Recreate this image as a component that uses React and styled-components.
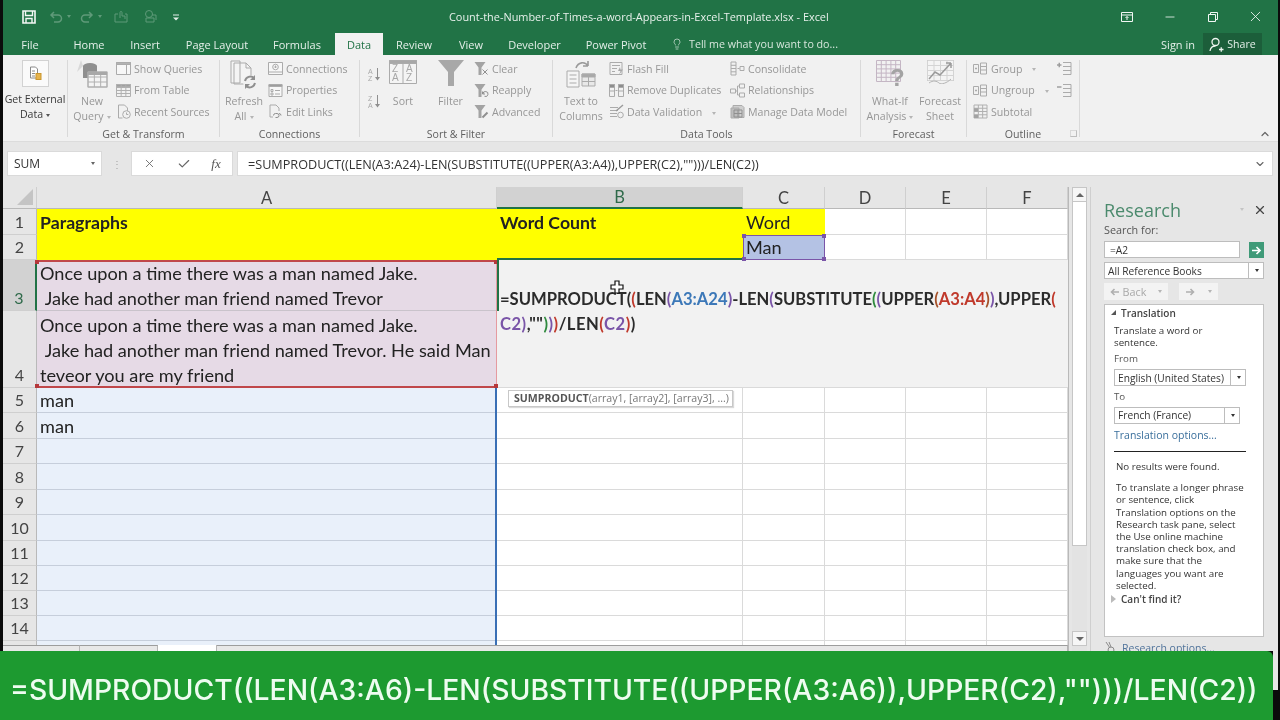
import React from 'react'
import styled, { createGlobalStyle } from 'styled-components'
import { Check, ChevronDown, ChevronUp, Lightbulb, Minus, X } from 'lucide-react'

const GlobalStyle = createGlobalStyle`
    html, body {
        margin: 0;
        padding: 0;
        background: #0b0b0b;
    }
    * {
        box-sizing: border-box;
    }
`

const UI_FONT = `"Open Sans", "Noto Sans", "Liberation Sans", sans-serif`
const CELL_FONT = `Lato, "Open Sans", sans-serif`

const Page = styled.div`
    width: 1280px;
    height: 720px;
    overflow: hidden;
    display: flex;
    flex-direction: column;
    font-family: ${UI_FONT};
    filter: blur(0.3px);
`

const Window = styled.div`
    height: 651px;
    margin: 0 2px 0 3px;
    display: flex;
    flex-direction: column;
    background: #e6e6e6;
    overflow: hidden;
`

/* title bar */
const TitleBar = styled.div`
    height: 33px;
    flex: none;
    display: flex;
    align-items: center;
    background: #217346;
    color: #f2f7f4;
`

const Qat = styled.div`
    width: 446px;
    padding-left: 10px;
    display: flex;
    align-items: center;
`

const QatSlot = styled.span`
    width: ${props => props.$w}px;
    display: flex;
    justify-content: center;
    align-items: center;
    gap: 3px;
`

const Title = styled.div`
    width: 380px;
    font-size: 10.92px;
    white-space: nowrap;
    color: #e8f1ec;
`

const WindowControls = styled.div`
    margin-left: auto;
    display: flex;
    padding-right: 1px;
`

const ControlSlot = styled.span`
    width: 43px;
    height: 33px;
    display: flex;
    justify-content: center;
    align-items: center;
`

/* tabs */
const TabRow = styled.div`
    height: 22px;
    flex: none;
    display: flex;
    align-items: stretch;
    background: #217346;
    color: #e4efe9;
    font-size: 11px;
`

const Tab = styled.div`
    width: ${props => props.$w}px;
    margin-left: ${props => props.$ml || 0}px;
    display: flex;
    justify-content: center;
    align-items: center;
    white-space: nowrap;
    background: ${props => (props.$active ? '#f1f1f1' : 'transparent')};
    color: ${props => (props.$active ? '#217346' : 'inherit')};
`

const TellMe = styled.div`
    margin-left: 11px;
    display: flex;
    align-items: center;
    gap: 6px;
    font-size: 10.7px;
    color: #d6e6dc;
`

const SignIn = styled.div`
    margin-left: auto;
    margin-right: 8px;
    display: flex;
    align-items: center;
`

const Share = styled.div`
    width: 59px;
    margin-right: 16px;
    display: flex;
    justify-content: center;
    align-items: center;
    gap: 3px;
    font-size: 10.6px;
    background: #1c5e3a;
`

/* ribbon */
const Ribbon = styled.div`
    height: 87px;
    flex: none;
    display: flex;
    padding-top: 5px;
    background: #f1f1f1;
    border-bottom: 1px solid #dcdcdc;
    font-size: 10.6px;
    color: #979797;
`

const Group = styled.div`
    position: relative;
    width: ${props => props.$w}px;
    height: 77px;
    flex: none;
    display: flex;
    flex-direction: column;
    border-right: 1px solid #d9d9d9;
`

const GroupBody = styled.div`
    height: 67px;
    flex: none;
    display: flex;
    padding-left: ${props => props.$pl || 0}px;
`

const GroupLabel = styled.div`
    height: 14px;
    flex: none;
    line-height: 14px;
    text-align: center;
    font-size: 10.6px;
    color: #5f5f5f;
    white-space: nowrap;
`

const BigButton = styled.div`
    width: ${props => props.$w}px;
    margin-left: ${props => props.$ml || 0}px;
    flex: none;
    display: flex;
    flex-direction: column;
    align-items: center;
    line-height: 15px;
    white-space: nowrap;
    color: ${props => (props.$on ? '#3a3a3a' : 'inherit')};
`

const BigIcon = styled.div`
    height: ${props => props.$h || 34}px;
    flex: none;
    display: flex;
    align-items: flex-start;
    justify-content: center;
`

const ExternalBox = styled.div`
    width: 27px;
    height: 27px;
    display: flex;
    justify-content: center;
    align-items: center;
    background: #fafafa;
    border: 1px solid #d2d2d2;
`

const SmallCol = styled.div`
    width: ${props => props.$w}px;
    flex: none;
    margin-top: -2px;
    display: flex;
    flex-direction: column;
`

const SmallRow = styled.div`
    height: 21.6px;
    flex: none;
    display: flex;
    align-items: center;
    gap: 3px;
    white-space: nowrap;
`

const IconSlot = styled.span`
    width: 15px;
    height: 15px;
    flex: none;
    display: flex;
    justify-content: center;
    align-items: center;
`

const Caret = styled.span`
    display: inline-block;
    width: 0;
    height: 0;
    margin-left: ${props => props.$ml || 3}px;
    vertical-align: middle;
    border-left: 2.5px solid transparent;
    border-right: 2.5px solid transparent;
    border-top: 3px solid ${props => props.$c || '#b5b5b5'};
`

const SortStack = styled.div`
    width: 14px;
    flex: none;
    display: flex;
    flex-direction: column;
    gap: 12px;
    padding-top: 7px;
`

const Launcher = styled.span`
    position: absolute;
    right: 2px;
    bottom: 0;
    width: 7px;
    height: 7px;
    border: 1px solid #bdbdbd;
    border-top-color: #d8d8d8;
    border-left-color: #d8d8d8;
`

const RibbonEnd = styled.div`
    flex: 1;
    display: flex;
    justify-content: flex-end;
    align-items: flex-end;
    padding: 0 7px 1px 0;
    color: #666;
`

/* formula bar */
const FormulaBar = styled.div`
    height: 45px;
    flex: none;
    display: flex;
    padding: 9px 5px 11px 4px;
    font-size: 12px;
    color: #333;
`

const NameBox = styled.div`
    width: 95px;
    display: flex;
    align-items: center;
    justify-content: space-between;
    padding: 0 6px;
    background: #fff;
    border: 1px solid #dadada;
`

const Dots = styled.div`
    width: 29px;
    display: flex;
    justify-content: center;
    align-items: center;
    color: #a5a5a5;
    font-size: 10px;
    line-height: 4px;
`

const FxBox = styled.div`
    width: 102px;
    display: flex;
    align-items: center;
    background: #fff;
    border: 1px solid #dadada;
`

const FxSlot = styled.span`
    width: ${props => props.$w}px;
    display: flex;
    justify-content: center;
    align-items: center;
    color: #666;
`

const FxMark = styled.i`
    font-family: "Liberation Serif", serif;
    font-size: 13px;
    color: #555;
`

const FormulaInput = styled.div`
    flex: 1;
    margin-left: 4px;
    padding: 0 6px 0 10px;
    display: flex;
    align-items: center;
    justify-content: space-between;
    background: #fff;
    border: 1px solid #dadada;
    white-space: nowrap;
    font-size: 12.65px;
`

/* worksheet */
const Workspace = styled.div`
    flex: 1;
    min-height: 0;
    display: flex;
`

const SheetArea = styled.div`
    width: 1066px;
    flex: none;
    display: flex;
    flex-direction: column;
`

const Sheet = styled.div`
    position: relative;
    height: 458px;
    flex: none;
    display: grid;
    grid-template-columns: 34px 460px 246px 82px 81px 81px 81px;
    grid-template-rows: ${props => props.$rows};
    border-right: 1px solid #b9b9b9;
    overflow: hidden;
    background: #fff;
    font-family: ${CELL_FONT};
    font-size: 18.15px;
    color: #222;
`

const Corner = styled.div`
    position: relative;
    background: #e6e6e6;
    border-right: 1px solid #cfcfcf;
    border-bottom: 1px solid #b9b9b9;

    &::after {
        content: '';
        position: absolute;
        right: 3px;
        bottom: 3px;
        border-left: 16px solid transparent;
        border-bottom: 16px solid #c4c4c4;
    }
`

const ColHead = styled.div`
    display: flex;
    justify-content: center;
    align-items: center;
    font-size: 16.5px;
    background: ${props => (props.$on ? '#d2d2d2' : '#e6e6e6')};
    color: ${props => (props.$on ? '#2f6a4a' : '#444')};
    border-right: 1px solid #cfcfcf;
    border-bottom: ${props => (props.$on ? '2px solid #217346' : '1px solid #b9b9b9')};
`

const RowHead = styled.div`
    grid-column: 1;
    display: flex;
    justify-content: center;
    align-items: flex-end;
    line-height: 25px;
    font-size: 16px;
    background: ${props => (props.$on ? '#d2d2d2' : '#e6e6e6')};
    color: ${props => (props.$on ? '#2f6a4a' : '#444')};
    border-right: ${props => (props.$on ? '2px solid #217346' : '1px solid #b9b9b9')};
    border-bottom: 1px solid #cfcfcf;
`

const Cell = styled.div`
    display: flex;
    align-items: flex-end;
    padding-left: 3px;
    line-height: 25.2px;
    white-space: pre-wrap;
    overflow: hidden;
    font-weight: ${props => (props.$bold ? 700 : 400)};
    font-size: ${props => (props.$bold ? '17.7px' : 'inherit')};
    background: ${props => props.$fill || '#fff'};
    border-right: 1px solid ${props => props.$line || '#dadada'};
    border-bottom: 1px solid ${props => props.$line || '#dadada'};
`

const CellText = styled.span`
    margin-bottom: -1.5px;
`

const Editor = styled.div`
    grid-column: span 5;
    grid-row: span 2;
    padding: 27px 0 0 3px;
    line-height: 25.2px;
    background: #f2f2f2;
    border-bottom: 1px solid #dadada;
    font-weight: 700;
    font-size: 16.6px;
    white-space: pre;
    color: #2b2b2b;
`

const EditorLine = styled.div`
    letter-spacing: ${props => props.$ls || 0}px;
`

const Tint = styled.span`
    color: ${props => props.$c};
`

/* these sit over the cells, placed in a grid area of the sheet */
const Range = styled.div`
    position: absolute;
    inset: 0;
    grid-area: ${props => props.$area};
    pointer-events: none;
    border-style: solid;
    border-color: ${props => props.$c};
    border-width: ${props => props.$bw};
`

const Handle = styled.span`
    position: absolute;
    width: 4px;
    height: 4px;
    background: ${props => props.$c};
    left: ${props => (props.$x ? 'auto' : '-2px')};
    right: ${props => (props.$x ? '-2px' : 'auto')};
    top: ${props => (props.$y ? 'auto' : '-2px')};
    bottom: ${props => (props.$y ? '-2px' : 'auto')};
`

const Tooltip = styled.div`
    position: absolute;
    left: 505px;
    top: 203px;
    width: 225px;
    height: 17px;
    padding-left: 5px;
    background: #fff;
    border: 1px solid #c8c8c8;
    box-shadow: 1px 1px 1px rgba(0, 0, 0, 0.15);
    font-family: ${UI_FONT};
    font-size: 10.6px;
    line-height: 14px;
    white-space: nowrap;
    color: #777;

    b {
        font-weight: 700;
        color: #555;
    }
`

const Pointer = styled.svg`
    position: absolute;
    left: 607px;
    top: 93px;
`

const SheetTabs = styled.div`
    height: 6px;
    flex: none;
    display: flex;
    background: #e6e6e6;
    border-right: 1px solid #b9b9b9;
`

const SheetTab = styled.div`
    width: ${props => props.$w}px;
    flex: ${props => (props.$w ? 'none' : 1)};
    background: ${props => (props.$on ? '#fff' : '#e8e8e8')};
    border-top: ${props => (props.$on ? '0' : '1px solid #9d9d9d')};
    border-right: 1px solid #b5b5b5;
`

/* vertical scroll bar */
const VScroll = styled.div`
    width: 15px;
    flex: none;
    margin: 0 3px;
    display: flex;
    flex-direction: column;
    background: #e3e3e3;
`

const ScrollBtn = styled.div`
    height: 15px;
    flex: none;
    display: flex;
    justify-content: center;
    align-items: center;
    background: #f6f6f6;
    border: 1px solid #c6c6c6;
`

const ScrollThumb = styled.div`
    height: 344px;
    flex: none;
    background: #fff;
    border: 1px solid #c6c6c6;
    border-top: 0;
`

const ScrollTrack = styled.div`
    flex: 1;
`

const ScrollFoot = styled.div`
    height: 5px;
    flex: none;
`

const Arrow = styled.span`
    width: 0;
    height: 0;
    border-left: 4px solid transparent;
    border-right: 4px solid transparent;
    ${props => (props.$up ? 'border-bottom' : 'border-top')}: 4px solid #666;
`

/* research pane */
const Research = styled.div`
    flex: 1;
    display: flex;
    flex-direction: column;
    padding: 10px 14px 0 13px;
    border-left: 1px solid #cfcfcf;
    font-size: 10.2px;
    color: #333;

    & > * {
        flex: none;
    }
`

const ResearchHead = styled.div`
    height: 25px;
    display: flex;
    align-items: center;
    color: #4b8a6d;
    font-size: 18px;
`

const HeadTools = styled.div`
    margin-left: auto;
    margin-right: -3px;
    display: flex;
    align-items: center;
    gap: 9px;
    color: #444;
`

const SearchLabel = styled.div`
    height: 19px;
    line-height: 15px;
    font-size: 10.8px;
    color: #555;
`

const SearchRow = styled.div`
    height: 17px;
    display: flex;
    justify-content: space-between;
`

const Field = styled.div`
    width: ${props => (props.$w ? `${props.$w}px` : '100%')};
    height: 17px;
    margin-top: ${props => props.$mt || 0}px;
    display: flex;
    align-items: center;
    justify-content: space-between;
    padding-left: ${props => props.$pl || 5}px;
    background: #fff;
    border: 1px solid #bdbdbd;
    white-space: nowrap;
`

const DropBtn = styled.span`
    width: 15px;
    height: 100%;
    display: flex;
    justify-content: center;
    align-items: center;
    border-left: 1px solid #bdbdbd;
`

const GoBtn = styled.div`
    width: 15px;
    height: 16px;
    margin-top: 1px;
    display: flex;
    justify-content: center;
    align-items: center;
    background: #3f9a78;
`

const NavRow = styled.div`
    height: 17px;
    margin-top: 4px;
    display: flex;
    color: #a9a9a9;
    font-size: 10.8px;
`

const NavBtn = styled.div`
    width: ${props => props.$w}px;
    margin-right: ${props => props.$mr || 0}px;
    display: flex;
    align-items: center;
    justify-content: space-around;
    background: #f3f3f3;
`

const BackLabel = styled.span`
    display: flex;
    align-items: center;
    gap: 3px;
`

const Panel = styled.div`
    height: 333px;
    margin-top: 4px;
    padding: 0 0 0 9px;
    background: #fff;
    border: 1px solid #c2c2c2;
    font-size: 9.75px;
`

const PanelTitle = styled.div`
    height: 15px;
    margin-left: -3px;
    display: flex;
    align-items: center;
    gap: 5px;
    font-weight: 600;
    font-size: 10px;
    color: #444;
`

const OpenTri = styled.span`
    width: 0;
    height: 0;
    border-left: 5px solid transparent;
    border-bottom: 5px solid #555;
`

const ClosedTri = styled.span`
    width: 0;
    height: 0;
    border-top: 4px solid transparent;
    border-bottom: 4px solid transparent;
    border-left: 5px solid #bbb;
`

const PanelText = styled.div`
    margin-top: ${props => props.$mt || 0}px;
    margin-left: ${props => props.$ml || 0}px;
    line-height: 12.2px;
    white-space: pre;
    color: ${props => props.$c || '#333'};
`

const PanelRule = styled.div`
    width: 132px;
    height: 1px;
    margin-top: 10.5px;
    background: #222;
`

const PanelLink = styled.div`
    margin-top: 5px;
    line-height: 12px;
    color: #3a6f9c;
    font-size: 10.5px;
`

const PanelField = styled(Field)`
    font-size: 10.2px;
`

const ResearchFoot = styled.div`
    height: 14px;
    margin-top: 4px;
    display: flex;
    align-items: center;
    gap: 4px;
    color: #51749b;
    font-size: 10.5px;
`

/* green caption */
const Bottom = styled.div`
    height: 69px;
    flex: none;
    display: flex;
`

const Caption = styled.div`
    width: 1273px;
    flex: none;
    padding: 10px 0 0 10px;
    background: #1d9a30;
    border-top-right-radius: 6px;
    color: #eefcf0;
    font-family: Inter, "Open Sans", sans-serif;
    font-size: 28.3px;
    font-weight: 500;
    line-height: 58px;
    white-space: nowrap;
`

const CaptionEdge = styled.div`
    width: 5px;
    height: 39px;
    background: #e6e6e6;
`

/* icons */
const Ico = styled.svg.attrs(props => ({
    width: props.$w || 15,
    height: props.$h || props.$w || 15,
    viewBox: `0 0 ${props.$w || 15} ${props.$h || props.$w || 15}`,
    fill: 'none',
    stroke: props.$c || '#ababab',
    strokeWidth: 1,
}))`
    display: block;
    flex: none;
`

const SvgLetters = styled.text`
    font-family: "Liberation Sans", sans-serif;
    font-size: ${props => props.$s || 7}px;
    font-weight: ${props => props.$weight || 400};
    fill: ${props => props.$c || '#a8a8a8'};
    stroke: none;
`

const TableLines = ({ x, y, w, h, cols = 3, rows = 3, c = '#b0b0b0' }) => {
    const lines = []
    for (let i = 0; i <= cols; i++) {
        const px = x + (w / cols) * i
        lines.push(<path key={'c' + i} d={`M${px} ${y}V${y + h}`} stroke={c} />)
    }
    for (let i = 0; i <= rows; i++) {
        const py = y + (h / rows) * i
        lines.push(<path key={'r' + i} d={`M${x} ${py}H${x + w}`} stroke={c} />)
    }
    return <>{lines}</>
}

const SaveIcon = () => (
    <Ico $w={14} $c="#f4f8f5">
        <path d="M1 1h12v12H1z" strokeWidth="1.6" />
        <path d="M3.5 1v4.5h7V1M4 13V8.5h6V13" strokeWidth="1.4" />
    </Ico>
)

const UndoIcon = () => (
    <Ico $w={14} $c="#5f9a79">
        <path d="M2 5h7a3.5 3.5 0 0 1 0 7H5M5 2 2 5l3 3" strokeWidth="1.5" />
    </Ico>
)

const RedoIcon = () => (
    <Ico $w={14} $c="#5f9a79">
        <path d="M12 5H5a3.5 3.5 0 0 0 0 7h4M9 2l3 3-3 3" strokeWidth="1.5" />
    </Ico>
)

const TouchIcon = () => (
    <Ico $w={15} $c="#5f9a79">
        <path d="M1 5h3M1 5v8h12V5h-2M6 9V3.5a1 1 0 0 1 2 0V7h3v3" />
    </Ico>
)

const PrintIcon = () => (
    <Ico $w={15} $c="#5f9a79">
        <circle cx="6" cy="5" r="3.5" />
        <path d="M3 9h8v4H3zM9 6h4v5" />
    </Ico>
)

const CustomizeIcon = () => (
    <Ico $w={8} $c="#e4efe9">
        <path d="M1 2h6" />
        <path d="M1 4.5h6L4 7.5z" fill="#e4efe9" stroke="none" />
    </Ico>
)

const RibbonDisplayIcon = () => (
    <Ico $w={14} $c="#f2f7f4">
        <path d="M1.5 2.5h11v9h-11zM1.5 5h11" />
        <path d="M7 10V6.5M5.5 8 7 6.5 8.5 8" />
    </Ico>
)

const RestoreIcon = () => (
    <Ico $w={12} $c="#f2f7f4">
        <path d="M1.5 3.5h7v7h-7zM3.5 3.5v-2h7v7h-2" />
    </Ico>
)

const ShareIcon = () => (
    <Ico $w={15} $c="#eef5f0">
        <circle cx="6.5" cy="5" r="3.5" strokeWidth="1.3" />
        <path d="M1 14c.4-3 2.5-5 5.5-5M10 12.5h4.5M12.25 10.2v4.6" strokeWidth="1.3" />
    </Ico>
)

const DataDocIcon = () => (
    <Ico $w={13} $h={15} $c="#8a8a8a">
        <path d="M1.5 1h5l2 2v9h-7z" fill="#fff" />
        <path d="M3 5h3M3 7.5h3M3 10h3" />
        <rect x="7" y="7.5" width="5" height="6" fill="#e6b34c" stroke="#c9962f" />
    </Ico>
)

const NewQueryIcon = () => (
    <Ico $w={32} $h={30}>
        <path d="M5 0 1 12l6-6z" fill="#d8d8d8" stroke="none" />
        <ellipse cx="14" cy="6" rx="7" ry="3" fill="#8f8f8f" stroke="none" />
        <path d="M7 6v12h14V6z" fill="#8f8f8f" stroke="none" />
        <rect x="12" y="12" width="19" height="15" fill="#f4f4f4" />
        <TableLines x={12} y={12} w={19} h={15} cols={3} rows={3} />
        <path d="M12 12h19v3H12z" fill="#a8a8a8" stroke="none" />
    </Ico>
)

const ShowQueriesIcon = () => (
    <Ico>
        <path d="M.5 1.5h14v12H.5z" fill="#f7f7f7" />
        <path d="M.5 1.5h14v2H.5z" fill="#b3b3b3" />
        <path d="M10.5 3.5v10" />
    </Ico>
)

const FromTableIcon = () => (
    <Ico>
        <path d="M.5 1.5h14v2H.5z" fill="#a0a0a0" />
        <TableLines x={0.5} y={1.5} w={14} h={12} cols={3} rows={4} />
    </Ico>
)

const RecentIcon = () => (
    <Ico>
        <path d="M2.5 1h6l3 3v3M2.5 1v13h4" />
        <circle cx="10.5" cy="10.5" r="3.8" fill="#f1f1f1" />
        <path d="M10.5 8.5v2h1.8" />
    </Ico>
)

const RefreshIcon = () => (
    <Ico $w={32} $h={32}>
        <path d="M3 1h9v22H3zM6 3h12l5 5v16H6z" fill="#f4f4f4" />
        <path d="M18 3v5h5" />
        <circle cx="22" cy="22" r="7" fill="#f1f1f1" stroke="none" />
        <path d="M17 21a5.5 5.5 0 0 1 9-3M27 23a5.5 5.5 0 0 1-9 3" stroke="#8f8f8f" strokeWidth="2" />
        <path d="M27 15v5h-5zM17 29v-5h5z" fill="#8f8f8f" stroke="none" />
    </Ico>
)

const ConnectionsIcon = () => (
    <Ico>
        <path d="M.5 1.5h14v12H.5z" fill="#f7f7f7" />
        <path d="M.5 11h14" />
        <circle cx="7.5" cy="6" r="2.8" />
        <path d="M7.5 4.5V7M6.3 6h2.4" />
    </Ico>
)

const PropertiesIcon = () => (
    <Ico>
        <path d="M1 1.5h13v12H1z" fill="#f7f7f7" />
        <path d="M1 1.5h13v2H1z" fill="#9d9d9d" />
        <path d="M3 6.5h2v2H3zM3 10h2v2H3zM7 7.5h5M7 11h5" />
    </Ico>
)

const EditLinksIcon = () => (
    <Ico>
        <path d="M2 13V1h6l3 3v3M2 13h3" />
        <path d="M5.5 11.5a2 2 0 0 1 2-2H9a2 2 0 0 1 0 4H7.5M13 11.5a2 2 0 0 0-2-2" stroke="#8f8f8f" />
    </Ico>
)

const SortSmallIcon = ({ top, bottom }) => (
    <Ico $w={13} $h={15}>
        <SvgLetters x="0" y="6.5">{top}</SvgLetters>
        <SvgLetters x="0" y="13.5">{bottom}</SvgLetters>
        <path d="M9.5 1v11" stroke="#8f8f8f" />
        <path d="M7 10h5l-2.5 3.5z" fill="#8f8f8f" stroke="none" />
    </Ico>
)

const SortBigIcon = () => (
    <Ico $w={28} $h={24}>
        <path d="M.5 .5h27v23H.5z" fill="#f4f4f4" />
        <path d="M.5 .5h27v3H.5z" fill="#a8a8a8" />
        <path d="M14 3.5v20" />
        <SvgLetters x="3" y="12" $s={10}>Z</SvgLetters>
        <SvgLetters x="3" y="21" $s={10}>A</SvgLetters>
        <SvgLetters x="17" y="12" $s={10}>A</SvgLetters>
        <SvgLetters x="17" y="21" $s={10}>Z</SvgLetters>
    </Ico>
)

const FunnelIcon = () => (
    <Ico $w={26} $h={26} $c="#a5a5a5">
        <path d="M0 0h26L16 12v14h-6V12z" fill="#a8a8a8" stroke="none" />
    </Ico>
)

const SmallFunnelIcon = ({ mark }) => (
    <Ico>
        <path d="M.5 1h11L7.5 6.5V14h-3V6.5z" fill="#a3a3a3" stroke="none" />
        {mark === 'clear' && <path d="M8.5 8.5l5 5M13.5 8.5l-5 5" stroke="#8f8f8f" />}
        {mark === 'redo' && <path d="M9 11a2.5 2.5 0 1 1 1.5 2.3M8.5 8.5V11H11" stroke="#8f8f8f" />}
        {mark === 'adv' && <path d="M8.5 13.5l5-5" stroke="#8f8f8f" strokeWidth="2" />}
    </Ico>
)

const TextColumnsIcon = () => (
    <Ico $w={30} $h={28}>
        <path d="M10 8c2-6 9-7 12-2M22 6V1M22 6h-5" stroke="#9a9a9a" strokeWidth="1.6" />
        <path d="M1 11h12v16H1zM3.5 15h7M3.5 19h7M3.5 23h7" fill="#f5f5f5" />
        <path d="M16 14h13v12H16z" fill="#e8e8e8" />
        <path d="M16 14h13v3H16z" fill="#a8a8a8" />
        <path d="M22.5 17v9M16 21.5h13" />
    </Ico>
)

const FlashFillIcon = () => (
    <Ico>
        <path d="M1 1.5h12v12H1zM3 4.5h8M3 7.5h5M3 10.5h3" />
        <path d="M11 6l-2 4h2.5L10 14l4-5.5h-2.5z" fill="#a8a8a8" stroke="none" />
    </Ico>
)

const RemoveDupIcon = () => (
    <Ico>
        <path d="M.5 1.5h5v12h-5zM9.5 1.5h5v12h-5z" />
        <path d="M.5 1.5h5v3h-5zM9.5 1.5h5v3h-5z" fill="#8d8d8d" />
        <path d="M.5 8h5M9.5 8h5M6.5 7.5h2" />
    </Ico>
)

const ValidationIcon = () => (
    <Ico>
        <path d="M1 3.5h8M1 6.5h8M1 9.5h7M1 12.5h7" />
        <path d="M7 7l7-6" stroke="#9a9a9a" strokeWidth="1.4" />
        <circle cx="11.5" cy="11" r="2.8" />
    </Ico>
)

const ConsolidateIcon = () => (
    <Ico>
        <path d="M1 1h5v13H1zM1 4.3h5M1 7.5h5M1 10.8h5M7.5 7.5h2" />
        <path d="M10 5.5h4v4h-4z" />
    </Ico>
)

const RelationshipsIcon = () => (
    <Ico>
        <path d="M.5 6h5v4h-5zM9.5 1h5v4h-5zM9.5 10h5v4h-5zM5.5 8h2V3h2M7.5 8v4h2" />
    </Ico>
)

const DataModelIcon = () => (
    <Ico>
        <path d="M3 1.5h9l2 2v10H3z" fill="#cfcfcf" />
        <path d="M1 4h8v10H1z" fill="#bdbdbd" />
        <TableLines x={4} y={6} w={8} h={7} cols={2} rows={2} c="#8f8f8f" />
    </Ico>
)

const WhatIfIcon = () => (
    <Ico $w={28} $h={33}>
        <TableLines x={0.5} y={0.5} w={24} h={21} cols={5} rows={5} c="#c4b6c4" />
        <SvgLetters x="14" y="26" $s={24} $c="#a3a3a3" $weight={700}>?</SvgLetters>
    </Ico>
)

const ForecastIcon = () => (
    <Ico $w={27} $h={24}>
        <path d="M.5 .5h26v20H.5z" fill="#f4f4f4" />
        <TableLines x={0.5} y={0.5} w={26} h={20} cols={4} rows={4} c="#d4d4d4" />
        <path d="M2 19l6-7 5 3 11-12M24 3h-5M24 3v5" stroke="#9a9a9a" strokeWidth="1.5" />
        <path d="M2 23c4-3 8-2 10 0s8 0 12-4" stroke="#b5b5b5" />
    </Ico>
)

const GroupIcon = () => (
    <Ico>
        <path d="M.5 3.5h5v8h-5zM2 7.5h2M3 6.5v2" />
        <path d="M7.5 2h6v11h-6zM7.5 5.5h6M7.5 9h6" />
    </Ico>
)

const SubtotalIcon = () => (
    <Ico>
        <TableLines x={1} y={1} w={13} h={13} cols={3} rows={4} />
        <path d="M1 4.25h4V7.5H1zM1 10.75h4V14H1z" fill="#a3a3a3" stroke="none" />
    </Ico>
)

const OutlineIcon = ({ minus }) => (
    <Ico>
        <path d="M0 4h4.5" stroke="#9a9a9a" strokeWidth="1.4" />
        {!minus && <path d="M2.25 1.75v4.5" stroke="#9a9a9a" strokeWidth="1.4" />}
        <path d="M6 1.5h8M6 5.5h8M6 9.5h8M6 13.5h8M14 1.5v12" />
    </Ico>
)

const rowHeights = [26, 25, 51, 77, 25, 26, 25, 26, 25, 26, 25, 25, 25, 25, 6]
const columns = ['A', 'B', 'C', 'D', 'E', 'F']
const gridRows = ['22px', ...rowHeights.map(h => `${h}px`)].join(' ')

const YELLOW = '#ffff00'
const MAUVE = '#e6dae6'
const BLUE = '#e9f0fa'

const paragraphs = {
    3: 'Once upon a time there was a man named Jake.\n Jake had another man friend named Trevor',
    4: 'Once upon a time there was a man named Jake.\n Jake had another man friend named Trevor. He said Man\nteveor you are my friend',
}

const RED = '#c0392b'
const PURPLE = '#7a55a8'
const AZURE = '#3c78b8'
const GREEN = '#2f8a3e'
const BROWN = '#a5522a'

const formulaFirstLine = [
    ['=SUMPRODUCT('],
    ['(', RED],
    ['LEN'],
    ['(', PURPLE],
    ['A3:A24', AZURE],
    [')', PURPLE],
    ['-LEN'],
    ['(', PURPLE],
    ['SUBSTITUTE'],
    ['(', GREEN],
    ['(', PURPLE],
    ['UPPER'],
    ['(', BROWN],
    ['A3:A4', RED],
    [')', BROWN],
    [')', PURPLE],
    [',UPPER'],
    ['(', RED],
]

const formulaSecondLine = [
    ['C2', PURPLE],
    [')', PURPLE],
    [',""'],
    [')', GREEN],
    [')', PURPLE],
    [')', RED],
    ['/LEN'],
    ['(', RED],
    ['C2', PURPLE],
    [')', RED],
    [')'],
]

const renderParts = parts =>
    parts.map(([text, color], i) =>
        color ? <Tint key={i} $c={color}>{text}</Tint> : <React.Fragment key={i}>{text}</React.Fragment>
    )

const researchBody = `To translate a longer phrase
or sentence, click
Translation options on the
Research task pane, select
the Use online machine
translation check box, and
make sure that the
languages you want are
selected.`

function renderRow(index) {
    const n = index + 1
    const on = n === 3
    const head = <RowHead key={`h${n}`} $on={on}>{n <= 14 ? n : ''}</RowHead>

    if (n === 1 || n === 2) {
        return [
            head,
            <Cell key={`a${n}`} $fill={YELLOW} $line={YELLOW} $bold><CellText>{n === 1 ? 'Paragraphs' : ''}</CellText></Cell>,
            <Cell key={`b${n}`} $fill={YELLOW} $line={YELLOW} $bold><CellText>{n === 1 ? 'Word Count' : ''}</CellText></Cell>,
            n === 1
                ? <Cell key="c1" $fill={YELLOW} $line={YELLOW}><CellText>Word</CellText></Cell>
                : <Cell key="c2" $fill="#b4c2e4"><CellText>Man</CellText></Cell>,
            <Cell key={`d${n}`} />,
            <Cell key={`e${n}`} />,
            <Cell key={`f${n}`} />,
        ]
    }
    if (n === 3) {
        return [
            head,
            <Cell key="a3" $fill={MAUVE} $line="#c9c3cb"><CellText>{paragraphs[3]}</CellText></Cell>,
            <Editor key="b3">
                <EditorLine>{renderParts(formulaFirstLine)}</EditorLine>
                <EditorLine $ls={0.5}>{renderParts(formulaSecondLine)}</EditorLine>
            </Editor>,
        ]
    }
    if (n === 4) {
        return [head, <Cell key="a4" $fill={MAUVE} $line="#c9c3cb"><CellText>{paragraphs[4]}</CellText></Cell>]
    }
    return [
        head,
        <Cell key={`a${n}`} $fill={BLUE} $line="#c6cedb"><CellText>{n === 5 || n === 6 ? 'man' : ''}</CellText></Cell>,
        ...columns.slice(1).map(c => <Cell key={c + n} />),
    ]
}

const corners = [[0, 0], [1, 0], [0, 1], [1, 1]]

function Ribbons() {
    const small = (icon, text, extra) => (
        <SmallRow>
            <IconSlot>{icon}</IconSlot>
            <span>{text}{extra}</span>
        </SmallRow>
    )

    return (
        <Ribbon>
            <Group $w={65}>
                <GroupBody>
                    <BigButton $w={64} $on>
                        <BigIcon $h={32}><ExternalBox><DataDocIcon /></ExternalBox></BigIcon>
                        <span>Get External</span>
                        <span>Data<Caret $c="#555" /></span>
                    </BigButton>
                </GroupBody>
            </Group>
            <Group $w={152}>
                <GroupBody>
                    <BigButton $w={48}>
                        <BigIcon><NewQueryIcon /></BigIcon>
                        <span>New</span>
                        <span>Query<Caret /></span>
                    </BigButton>
                    <SmallCol $w={100}>
                        {small(<ShowQueriesIcon />, 'Show Queries')}
                        {small(<FromTableIcon />, 'From Table')}
                        {small(<RecentIcon />, 'Recent Sources')}
                    </SmallCol>
                </GroupBody>
                <GroupLabel>Get &amp; Transform</GroupLabel>
            </Group>
            <Group $w={140}>
                <GroupBody>
                    <BigButton $w={48}>
                        <BigIcon><RefreshIcon /></BigIcon>
                        <span>Refresh</span>
                        <span>All<Caret /></span>
                    </BigButton>
                    <SmallCol $w={90}>
                        {small(<ConnectionsIcon />, 'Connections')}
                        {small(<PropertiesIcon />, 'Properties')}
                        {small(<EditLinksIcon />, 'Edit Links')}
                    </SmallCol>
                </GroupBody>
                <GroupLabel>Connections</GroupLabel>
            </Group>
            <Group $w={193}>
                <GroupBody $pl={8}>
                    <SortStack>
                        <SortSmallIcon top="A" bottom="Z" />
                        <SortSmallIcon top="Z" bottom="A" />
                    </SortStack>
                    <BigButton $w={42}>
                        <BigIcon><SortBigIcon /></BigIcon>
                        <span>Sort</span>
                    </BigButton>
                    <BigButton $w={47} $ml={3}>
                        <BigIcon><FunnelIcon /></BigIcon>
                        <span>Filter</span>
                    </BigButton>
                    <SmallCol $w={75}>
                        {small(<SmallFunnelIcon mark="clear" />, 'Clear')}
                        {small(<SmallFunnelIcon mark="redo" />, 'Reapply')}
                        {small(<SmallFunnelIcon mark="adv" />, 'Advanced')}
                    </SmallCol>
                </GroupBody>
                <GroupLabel>Sort &amp; Filter</GroupLabel>
            </Group>
            <Group $w={308}>
                <GroupBody>
                    <BigButton $w={56}>
                        <BigIcon><TextColumnsIcon /></BigIcon>
                        <span>Text to</span>
                        <span>Columns</span>
                    </BigButton>
                    <SmallCol $w={121}>
                        {small(<FlashFillIcon />, 'Flash Fill')}
                        {small(<RemoveDupIcon />, 'Remove Duplicates')}
                        {small(<ValidationIcon />, 'Data Validation', <Caret $ml={10} />)}
                    </SmallCol>
                    <SmallCol $w={125}>
                        {small(<ConsolidateIcon />, 'Consolidate')}
                        {small(<RelationshipsIcon />, 'Relationships')}
                        {small(<DataModelIcon />, 'Manage Data Model')}
                    </SmallCol>
                </GroupBody>
                <GroupLabel>Data Tools</GroupLabel>
            </Group>
            <Group $w={106}>
                <GroupBody>
                    <BigButton $w={58}>
                        <BigIcon><WhatIfIcon /></BigIcon>
                        <span>What-If</span>
                        <span>Analysis<Caret /></span>
                    </BigButton>
                    <BigButton $w={42}>
                        <BigIcon><ForecastIcon /></BigIcon>
                        <span>Forecast</span>
                        <span>Sheet</span>
                    </BigButton>
                </GroupBody>
                <GroupLabel>Forecast</GroupLabel>
            </Group>
            <Group $w={113}>
                <GroupBody $pl={6}>
                    <SmallCol $w={84}>
                        {small(<GroupIcon />, 'Group', <Caret $ml={10} />)}
                        {small(<GroupIcon />, 'Ungroup', <Caret $ml={10} />)}
                        {small(<SubtotalIcon />, 'Subtotal')}
                    </SmallCol>
                    <SmallCol $w={16}>
                        <SmallRow><OutlineIcon /></SmallRow>
                        <SmallRow><OutlineIcon minus /></SmallRow>
                    </SmallCol>
                </GroupBody>
                <GroupLabel>Outline</GroupLabel>
                <Launcher />
            </Group>
            <RibbonEnd><ChevronUp size={12} strokeWidth={2.4} /></RibbonEnd>
        </Ribbon>
    )
}

export default function App() {
    return (
        <Page>
            <GlobalStyle />
            <Window>
                <TitleBar>
                    <Qat>
                        <QatSlot $w={32}><SaveIcon /></QatSlot>
                        <QatSlot $w={30}><UndoIcon /><Caret $c="#5f9a79" $ml={1} /></QatSlot>
                        <QatSlot $w={32}><RedoIcon /><Caret $c="#5f9a79" $ml={1} /></QatSlot>
                        <QatSlot $w={28}><TouchIcon /></QatSlot>
                        <QatSlot $w={30}><PrintIcon /></QatSlot>
                        <QatSlot $w={22}><CustomizeIcon /></QatSlot>
                    </Qat>
                    <Title>Count-the-Number-of-Times-a-word-Appears-in-Excel-Template.xlsx - Excel</Title>
                    <WindowControls>
                        <ControlSlot><RibbonDisplayIcon /></ControlSlot>
                        <ControlSlot><Minus size={14} strokeWidth={1.4} /></ControlSlot>
                        <ControlSlot><RestoreIcon /></ControlSlot>
                        <ControlSlot><X size={17} strokeWidth={1.2} /></ControlSlot>
                    </WindowControls>
                </TitleBar>
                <TabRow>
                    <Tab $w={54}>File</Tab>
                    <Tab $w={64}>Home</Tab>
                    <Tab $w={48}>Insert</Tab>
                    <Tab $w={96}>Page Layout</Tab>
                    <Tab $w={64}>Formulas</Tab>
                    <Tab $w={48} $ml={6} $active>Data</Tab>
                    <Tab $w={62}>Review</Tab>
                    <Tab $w={52}>View</Tab>
                    <Tab $w={75}>Developer</Tab>
                    <Tab $w={88}>Power Pivot</Tab>
                    <TellMe>
                        <Lightbulb size={12} strokeWidth={1.4} />
                        <span>Tell me what you want to do...</span>
                    </TellMe>
                    <SignIn>Sign in</SignIn>
                    <Share><ShareIcon />Share</Share>
                </TabRow>
                <Ribbons />
                <FormulaBar>
                    <NameBox>
                        <span>SUM</span>
                        <Caret $c="#666" />
                    </NameBox>
                    <Dots>⋮</Dots>
                    <FxBox>
                        <FxSlot $w={35}><X size={13} strokeWidth={1.6} /></FxSlot>
                        <FxSlot $w={33}><Check size={14} strokeWidth={2} /></FxSlot>
                        <FxSlot $w={32}><FxMark>fx</FxMark></FxSlot>
                    </FxBox>
                    <FormulaInput>
                        <span>=SUMPRODUCT((LEN(A3:A24)-LEN(SUBSTITUTE((UPPER(A3:A4)),UPPER(C2),"")))/LEN(C2))</span>
                        <ChevronDown size={12} strokeWidth={2.2} color="#666" />
                    </FormulaInput>
                </FormulaBar>
                <Workspace>
                    <SheetArea>
                        <Sheet $rows={gridRows}>
                            <Corner />
                            {columns.map(c => <ColHead key={c} $on={c === 'B'}>{c}</ColHead>)}
                            {rowHeights.map((_, i) => renderRow(i))}

                            <Range $area="6 / 2 / 17 / 3" $c="#3a6fb5" $bw="0 2px 0 0" />
                            <Range $area="4 / 2 / 6 / 3" $c="#c0474a #e59aa0" $bw="2px 1px 2px 0">
                                {corners.map(([x, y]) => <Handle key={`r${x}${y}`} $x={x} $y={y} $c="#b5383b" />)}
                            </Range>
                            <Range $area="4 / 3 / 5 / 4" $c="#217346" $bw="0 0 0 2px" />
                            <Range $area="3 / 3 / 4 / 4" $c="#217346" $bw="0 0 2px 0" />
                            <Range $area="3 / 4 / 4 / 5" $c="#7a55a8" $bw="1px">
                                {corners.map(([x, y]) => <Handle key={`p${x}${y}`} $x={x} $y={y} $c="#7a55a8" />)}
                            </Range>

                            <Tooltip><b>SUMPRODUCT</b>(array1, [array2], [array3], ...)</Tooltip>
                            <Pointer width="14" height="14" viewBox="0 0 14 14">
                                <path d="M5 1h4v4h4v4H9v4H5V9H1V5h4z" fill="#fff" stroke="#111" strokeWidth="1.2" />
                            </Pointer>
                        </Sheet>
                        <SheetTabs>
                            <SheetTab $w={77} />
                            <SheetTab $w={78} />
                            <SheetTab $w={59} $on />
                            <SheetTab />
                        </SheetTabs>
                    </SheetArea>
                    <VScroll>
                        <ScrollBtn><Arrow $up /></ScrollBtn>
                        <ScrollThumb />
                        <ScrollTrack />
                        <ScrollBtn><Arrow /></ScrollBtn>
                        <ScrollFoot />
                    </VScroll>
                    <Research>
                        <ResearchHead>
                            <span>Research</span>
                            <HeadTools>
                                <Caret $c="#c4c4c4" />
                                <X size={14} strokeWidth={2} />
                            </HeadTools>
                        </ResearchHead>
                        <SearchLabel>Search for:</SearchLabel>
                        <SearchRow>
                            <Field $w={136}>=A2</Field>
                            <GoBtn>
                                <Ico $w={11} $c="#fff">
                                    <path d="M1 5.5h8M5.5 2L9 5.5 5.5 9" strokeWidth="1.7" />
                                </Ico>
                            </GoBtn>
                        </SearchRow>
                        <Field $mt={4} $pl={3}>
                            <span>All Reference Books</span>
                            <DropBtn><Caret $c="#333" $ml={1} /></DropBtn>
                        </Field>
                        <NavRow>
                            <NavBtn $w={64} $mr={11}>
                                <BackLabel>
                                    <Ico $w={10} $c="#b0b0b0"><path d="M9 5H1.5M4.5 2l-3 3 3 3" strokeWidth="1.6" /></Ico>
                                    Back
                                </BackLabel>
                                <Caret $ml={1} />
                            </NavBtn>
                            <NavBtn $w={39}>
                                <Ico $w={10} $c="#b0b0b0"><path d="M1 5h7.5M5.5 2l3 3-3 3" strokeWidth="1.6" /></Ico>
                                <Caret $ml={1} />
                            </NavBtn>
                        </NavRow>
                        <Panel>
                            <PanelTitle><OpenTri />Translation</PanelTitle>
                            <PanelText $mt={5}>{'Translate a word or\nsentence.'}</PanelText>
                            <PanelText $mt={3.6} $c="#555">From</PanelText>
                            <PanelField $w={132} $pl={3} $mt={4}>
                                <span>English (United States)</span>
                                <DropBtn><Caret $c="#333" $ml={1} /></DropBtn>
                            </PanelField>
                            <PanelText $mt={4.4} $c="#555">To</PanelText>
                            <PanelField $w={126} $pl={3} $mt={4}>
                                <span>French (France)</span>
                                <DropBtn><Caret $c="#333" $ml={1} /></DropBtn>
                            </PanelField>
                            <PanelLink>Translation options...</PanelLink>
                            <PanelRule />
                            <PanelText $mt={9} $ml={2}>No results were found.</PanelText>
                            <PanelText $mt={8.6} $ml={2}>{researchBody}</PanelText>
                            <PanelTitle><ClosedTri />Can't find it?</PanelTitle>
                        </Panel>
                        <ResearchFoot>
                            <Ico $w={14} $c="#8a8a8a">
                                <circle cx="7" cy="9" r="3" />
                                <path d="M2 1l4 6M5 1l2 5" />
                            </Ico>
                            <span>Research options...</span>
                        </ResearchFoot>
                    </Research>
                </Workspace>
            </Window>
            <Bottom>
                <Caption>=SUMPRODUCT((LEN(A3:A6)-LEN(SUBSTITUTE((UPPER(A3:A6)),UPPER(C2),"")))/LEN(C2))</Caption>
                <CaptionEdge />
            </Bottom>
        </Page>
    )
}
